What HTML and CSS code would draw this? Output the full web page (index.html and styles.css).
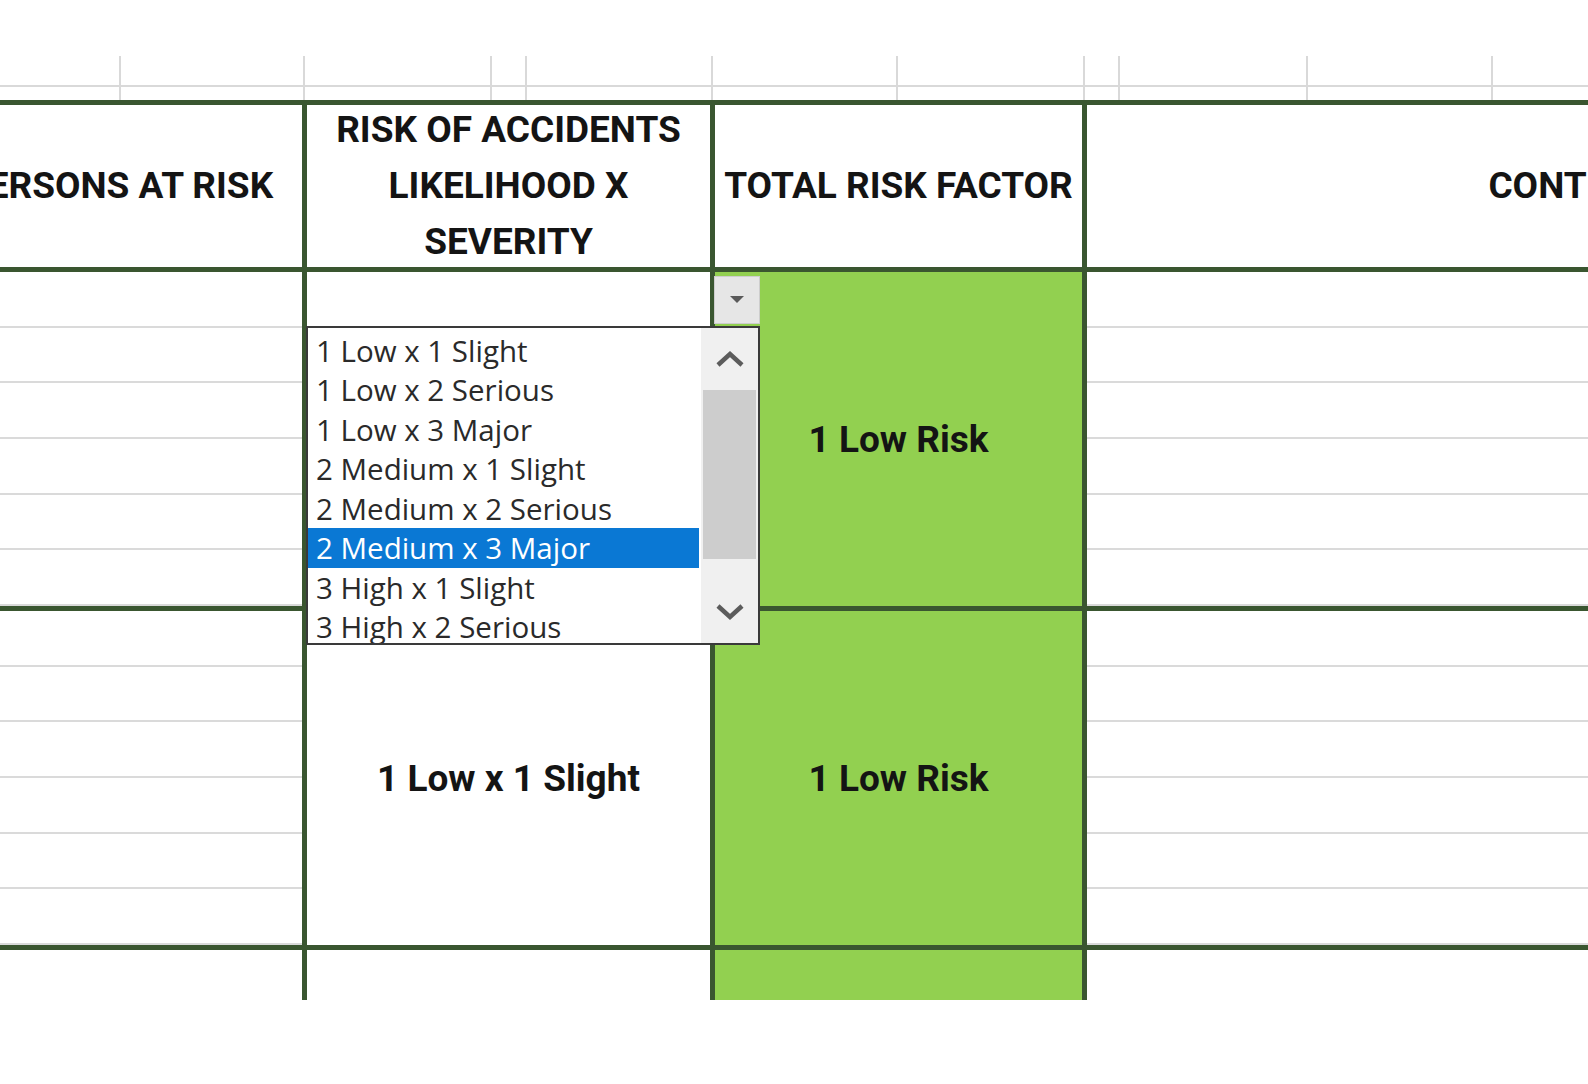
FILE: index.html
```html
<!DOCTYPE html>
<html lang="en">
<head>
  <meta charset="UTF-8" />
  <title>Risk Assessment</title>
  <link rel="stylesheet" href="styles.css">
</head>
<body>
  <div class="strip">
    <span></span><span></span><span></span><span></span><span></span><span></span>
    <span></span><span></span><span></span><span></span><span></span>
  </div>

  <div class="sheet">
    <div class="cell head">PERSONS AT RISK</div>
    <div class="cell head">RISK OF ACCIDENTS<br>LIKELIHOOD X<br>SEVERITY</div>
    <div class="cell head">TOTAL RISK FACTOR</div>
    <div class="cell head">CONTROL MEASURES</div>

    <div class="cell ruled"></div>
    <div class="cell choice">
      <div class="drop-btn">
        <svg width="14" height="8" viewBox="0 0 14 8"><polygon points="0,0 14,0 7,7" fill="#5a5a5a"/></svg>
      </div>
      <div class="drop-list">
        <ul class="options">
          <li>1 Low x 1 Slight</li>
          <li>1 Low x 2 Serious</li>
          <li>1 Low x 3 Major</li>
          <li>2 Medium x 1 Slight</li>
          <li>2 Medium x 2 Serious</li>
          <li class="selected">2 Medium x 3 Major</li>
          <li>3 High x 1 Slight</li>
          <li>3 High x 2 Serious</li>
        </ul>
        <div class="scroll">
          <div class="arrow">
            <svg width="30" height="18" viewBox="0 0 30 18"><polyline points="3,15 15,4 27,15" fill="none" stroke="#5c5c5c" stroke-width="4.5"/></svg>
          </div>
          <div class="thumb"></div>
          <div class="track"></div>
          <div class="arrow">
            <svg width="30" height="18" viewBox="0 0 30 18"><polyline points="3,3 15,14 27,3" fill="none" stroke="#5c5c5c" stroke-width="4.5"/></svg>
          </div>
        </div>
      </div>
    </div>
    <div class="cell factor">1 Low Risk</div>
    <div class="cell ruled"></div>

    <div class="cell ruled"></div>
    <div class="cell">1 Low x 1 Slight</div>
    <div class="cell factor">1 Low Risk</div>
    <div class="cell ruled"></div>

    <div class="cell ruled"></div>
    <div class="cell"></div>
    <div class="cell factor"></div>
    <div class="cell ruled"></div>
  </div>
</body>
</html>
```

FILE: styles.css
```css
* { box-sizing: border-box; }
html, body {
  margin: 0;
  overflow: hidden;
  background: #fff;
}
body {
  font-family: Roboto, "Liberation Sans", sans-serif;
  color: #141414;
}

/* faint grid above the table */
.strip {
  display: grid;
  grid-template-columns: 119px 184px 187px 35px 186px 185px 187px 35px 188px 185px 1fr;
  height: 44px;
  margin-top: 56px;
  background: linear-gradient(#d9d9d9, #d9d9d9) 0 29px / 100% 2px no-repeat;
}
.strip span {
  border-left: 2px solid #d9d9d9;
}
.strip span:first-child {
  border-left: none;
}

.sheet {
  display: grid;
  grid-template-columns: 367px 403px 367px 1172px;
  grid-template-rows: 162px 334px 334px 50px;
  gap: 5px;
  padding-top: 5px;
  margin-left: -65px;
  width: max-content;
  background: #3a5630;
}
.cell {
  background: #fff;
  display: flex;
  align-items: center;
  justify-content: center;
  text-align: center;
  font-weight: 700;
  font-size: 37px;
}
.head {
  line-height: 56px;
}
.ruled {
  background: #fff repeating-linear-gradient(to bottom, transparent 0 53.67px, #dadada 53.67px 55.67px);
}
.factor {
  background: #92d050;
}
.choice {
  position: relative;
}

.drop-btn {
  position: absolute;
  left: 407px;
  top: 4px;
  width: 46px;
  height: 48px;
  background: #e6e6e6;
  border: 1px solid #cdcdcd;
  display: flex;
  align-items: center;
  justify-content: center;
  z-index: 2;
}
.drop-list {
  position: absolute;
  left: -1px;
  top: 54px;
  width: 454px;
  height: 319px;
  border: 2px solid #3a3a3a;
  background: #fff;
  display: flex;
  z-index: 3;
  font-family: "Open Sans", "Noto Sans", sans-serif;
  font-weight: 400;
  font-size: 29.5px;
  color: #2a2a2a;
}
.options {
  flex: 1;
  list-style: none;
  margin: 0;
  padding: 2.5px 0 0;
  overflow: hidden;
}
.options li {
  height: 39.5px;
  line-height: 39.5px;
  padding-left: 8px;
  text-align: left;
  white-space: nowrap;
}
.options li.selected {
  background: #0a78d4;
  color: #fff;
}
.scroll {
  width: 57px;
  margin-left: 2px;
  background: #f0f0f0;
  display: flex;
  flex-direction: column;
  align-items: center;
}
.scroll .arrow {
  height: 62px;
  width: 100%;
  display: flex;
  align-items: center;
  justify-content: center;
}
.scroll .thumb {
  width: 53px;
  height: 169px;
  background: #cdcdcd;
}
.scroll .track {
  flex: 1;
}
```
